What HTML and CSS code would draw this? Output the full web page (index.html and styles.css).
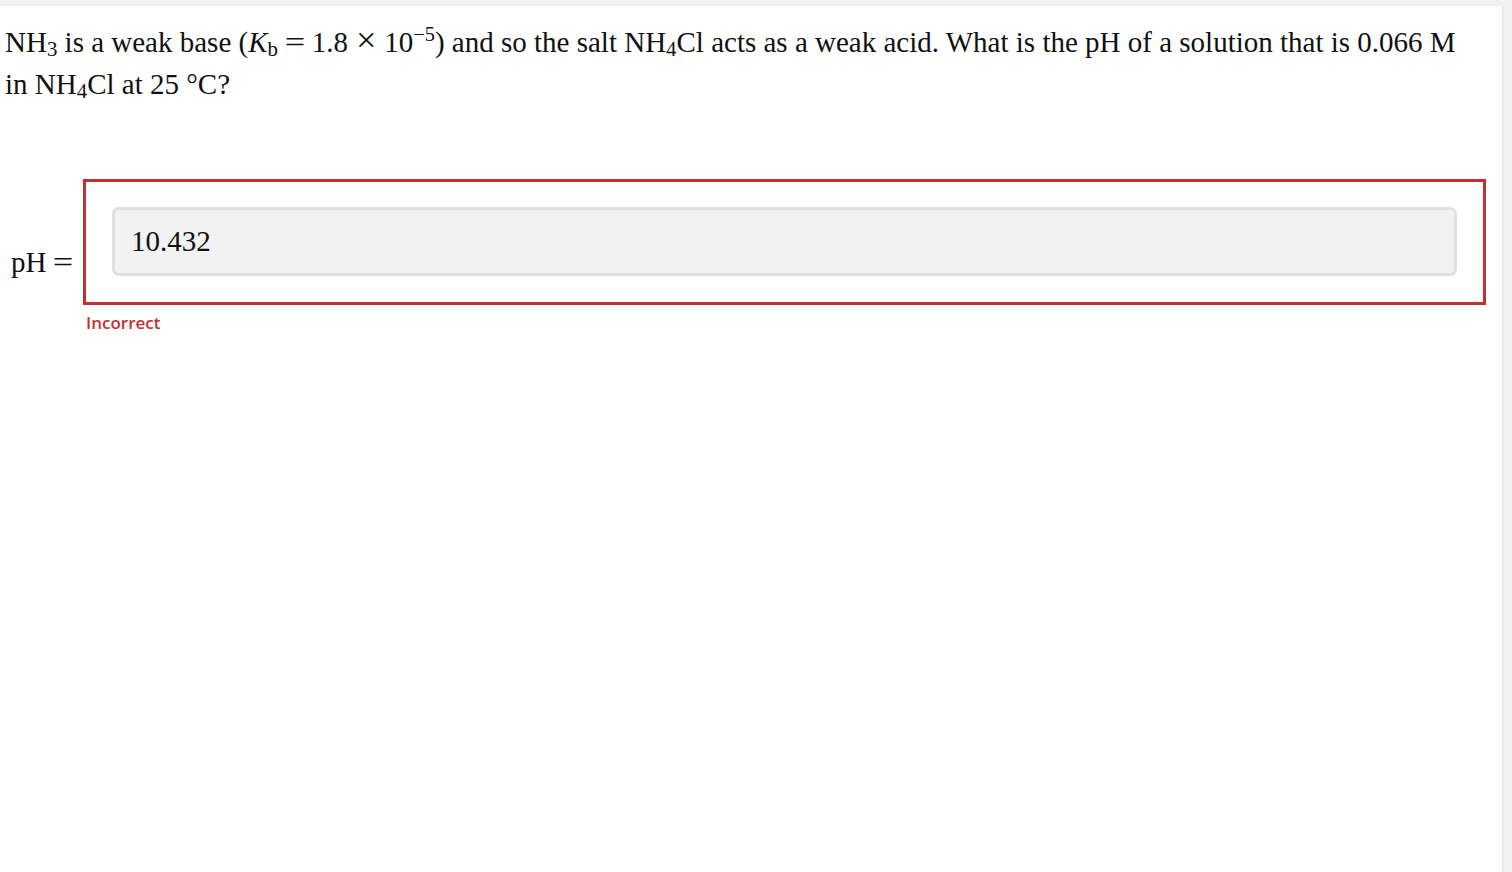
FILE: index.html
```html
<!DOCTYPE html>
<html lang="en">
<head>
<meta charset="utf-8">
<title>NH4Cl pH question</title>
<link rel="stylesheet" href="styles.css">
</head>
<body>
<main class="panel">
  <p class="question">NH<sub class="sub">3</sub> is a weak base (<span class="math"><i class="var">K</i><sub class="sub sub-math">b</sub><span class="rel">=</span>1.8<span class="bin">×</span>10<sup class="sup">−5</sup></span>) and so the salt NH<sub class="sub">4</sub>Cl acts as a weak acid. What is the pH of a solution that is 0.066 M in NH<sub class="sub">4</sub>Cl at 25 °C?</p>
  <div class="answer-row">
    <div class="answer-label">pH<span class="rel">=</span></div>
    <div class="answer-col">
      <div class="answer-box">
        <div class="answer-input">10.432</div>
      </div>
      <div class="feedback">Incorrect</div>
    </div>
  </div>
</main>
</body>
</html>
```
FILE: styles.css
```css
html, body {
  margin: 0;
  padding: 0;
}
body {
  background: #f2f2f2;
  width: 1512px;
  height: 872px;
  overflow: hidden;
  font-family: "Liberation Serif", "Times New Roman", serif;
  color: #111;
}
.panel {
  margin-top: 6px;
  width: 1502px;
  height: 866px;
  background: #fff;
  box-shadow: 1px 0 2px rgba(0, 0, 0, 0.08);
  padding: 15px 0 0 5px;
  box-sizing: border-box;
}
.question {
  margin: 0;
  width: 1474px;
  font-size: 29px;
  line-height: 42px;
}
.sub {
  font-size: 0.72em;
  vertical-align: -0.2em;
  line-height: 1;
}
.sub-math {
  font-size: 0.72em;
  vertical-align: -0.2em;
}
.sup {
  font-size: 0.7em;
  vertical-align: 0.55em;
  line-height: 1;
}
.var {
  font-style: italic;
}
.rel {
  display: inline-block;
  padding: 0 0.3em;
  transform: scaleX(1.25);
}
.bin {
  display: inline-block;
  padding: 0 0.22em;
  font-size: 1.25em;
  line-height: 1;
}
.answer-row {
  display: flex;
  align-items: flex-start;
  margin-top: 74px;
}
.answer-label {
  font-size: 29px;
  line-height: 42px;
  padding: 62px 0 0 6px;
  width: 78px;
  box-sizing: border-box;
  white-space: nowrap;
}
.answer-col {
  display: flex;
  flex-direction: column;
}
.answer-box {
  width: 1403px;
  height: 126px;
  box-sizing: border-box;
  border: 3px solid #c62f2f;
  padding: 25px 26px;
}
.answer-input {
  height: 69px;
  box-sizing: border-box;
  background: #f2f2f2;
  border: 3px solid #e0e0e0;
  border-radius: 7px;
  padding: 0 16px;
  font-size: 29px;
  line-height: 62px;
  color: #111;
}
.feedback {
  margin: 6px 0 0 3px;
  font-family: "Open Sans", "Liberation Sans", sans-serif;
  font-weight: 600;
  font-size: 17px;
  line-height: 24px;
  color: #c62f2f;
}
```
